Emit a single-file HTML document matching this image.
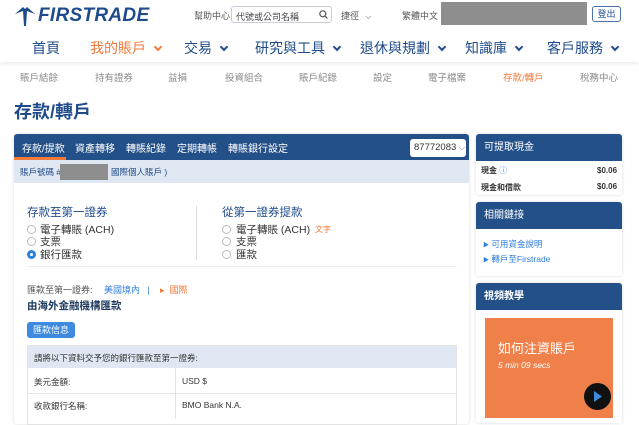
<!DOCTYPE html>
<html><head><meta charset="utf-8"><style>
*{margin:0;padding:0;box-sizing:border-box}
body{width:639px;height:416px;overflow:hidden;background:#fff;font-family:"Liberation Sans","Noto Sans CJK TC",sans-serif;position:relative;color:#333}
.a{position:absolute;white-space:nowrap}
.nav{color:#1f4b8a;font-size:14px;top:38px}
.chev{display:inline-block;width:6px;height:6px;border-right:2px solid currentColor;border-bottom:2px solid currentColor;transform:rotate(45deg);margin-left:9px;position:relative;top:-3px}
.sub{font-size:9.5px;color:#8a8a8a;top:70px}
.tab{font-size:10px;color:#fff;top:140px}
.rad{width:9px;height:9px;border:1px solid #bbb;border-radius:50%;position:absolute}
.lbl{font-size:10.5px;color:#333}
.hd{position:absolute;background:#245089;color:#fff;font-size:10px;padding-left:8px;border-radius:3px 3px 0 0}
</style></head><body>
<svg class="a" style="left:14px;top:5px" width="22" height="22" viewBox="0 0 22 22"><path d="M1 9 L9 2 L11 4 L13 2 L21 9 L13 6 L12 21 L10 21 L9 6 Z" fill="#1f4b8a"/></svg>
<div class="a" style="left:38px;top:5px;font-size:19px;font-weight:bold;font-style:italic;color:#1f4b8a;letter-spacing:0.3px">FIRSTRADE</div>
<div class="a" style="left:194px;top:9px;font-size:9px;color:#555">幫助中心</div>
<div class="a" style="left:231px;top:6px;width:101px;height:17px;border:1px solid #ccd;border-radius:3px;font-size:9px;color:#444;padding:3px 0 0 4px">代號或公司名稱</div>
<svg class="a" style="left:319px;top:10px" width="9" height="9"><circle cx="3.8" cy="3.8" r="3" stroke="#555" fill="none" stroke-width="1.2"/><path d="M6 6 L8.5 8.5" stroke="#555" stroke-width="1.2"/></svg>
<div class="a" style="left:341px;top:9px;font-size:9px;color:#555">捷徑 <span style="margin-left:4px;font-size:8px">⌵</span></div>
<div class="a" style="left:402px;top:9px;font-size:9px;color:#555">繁體中文 <span style="margin-left:2px;font-size:8px">⌵</span></div>
<div class="a" style="left:441px;top:2px;width:146px;height:23px;background:#8e8e8e"></div>
<div class="a" style="left:592px;top:6px;width:29px;height:16px;border:1px solid #4a72a8;border-radius:3px;font-size:9px;color:#1f4b8a;text-align:center;line-height:14px">登出</div>
<div class="a" style="left:0;top:30px;width:639px;height:32px;background:#fff;box-shadow:0 2px 4px rgba(0,0,0,0.08)"></div>
<div class="a nav" style="left:32px">首頁</div>
<div class="a nav" style="left:90px;color:#f07a3a">我的賬戶<span class="chev"></span></div>
<div class="a nav" style="left:184px">交易<span class="chev"></span></div>
<div class="a nav" style="left:255px">研究與工具<span class="chev"></span></div>
<div class="a nav" style="left:360px">退休與規劃<span class="chev"></span></div>
<div class="a nav" style="left:465px">知識庫<span class="chev"></span></div>
<div class="a nav" style="left:547px">客戶服務<span class="chev"></span></div>
<div class="a sub" style="left:20px">賬戶結餘</div>
<div class="a sub" style="left:95px">持有證券</div>
<div class="a sub" style="left:168px">益損</div>
<div class="a sub" style="left:225px">投資組合</div>
<div class="a sub" style="left:299px">賬戶紀錄</div>
<div class="a sub" style="left:373px">設定</div>
<div class="a sub" style="left:428px">電子檔案</div>
<div class="a sub" style="left:503px;color:#f07a3a">存款/轉戶</div>
<div class="a sub" style="left:580px">稅務中心</div>
<div class="a" style="left:14px;top:98px;font-size:18px;font-weight:bold;color:#1f4b8a">存款/轉戶</div>
<div class="a" style="left:14px;top:134px;width:455px;height:290px;background:#fff;box-shadow:0 0 3px rgba(0,0,0,0.15);border-radius:3px"></div>
<div class="a" style="left:14px;top:134px;width:455px;height:26px;background:#245089;border-radius:3px 3px 0 0"></div>
<div class="a" style="left:14px;top:157px;width:52px;height:3px;background:#f07a3a"></div>
<div class="a tab" style="left:22px">存款/提款</div>
<div class="a tab" style="left:75px">資產轉移</div>
<div class="a tab" style="left:126px">轉賬紀錄</div>
<div class="a tab" style="left:177px">定期轉帳</div>
<div class="a tab" style="left:228px">轉賬銀行設定</div>
<div class="a" style="left:410px;top:139px;width:56px;height:18px;background:#fff;border-radius:3px;font-size:9.5px;color:#333;padding:3px 0 0 4px">87772083 <span style="font-size:8px;color:#777">⌵</span></div>
<div class="a" style="left:14px;top:160px;width:455px;height:23px;background:#dfe7f2"></div>
<div class="a" style="left:20px;top:166px;font-size:8.5px;color:#1f4b8a">賬戶號碼 #</div>
<div class="a" style="left:60px;top:164px;width:48px;height:16px;background:#8e8e8e"></div>
<div class="a" style="left:111px;top:166px;font-size:8.5px;color:#1f4b8a">國際個人賬戶 )</div>
<div class="a" style="left:27px;top:204px;font-size:11.5px;color:#1f4b8a">存款至第一證券</div>
<div class="rad" style="left:27px;top:225px"></div><div class="a lbl" style="left:40px;top:222px">電子轉賬 (ACH)</div>
<div class="rad" style="left:27px;top:237px"></div><div class="a lbl" style="left:40px;top:234px">支票</div>
<div class="rad" style="left:27px;top:250px;border:3px solid #2d7fe0"></div><div class="a lbl" style="left:40px;top:247px">銀行匯款</div>
<div class="a" style="left:196px;top:206px;width:1px;height:54px;background:#ddd"></div>
<div class="a" style="left:222px;top:204px;font-size:11.5px;color:#1f4b8a">從第一證券提款</div>
<div class="rad" style="left:222px;top:225px"></div><div class="a lbl" style="left:236px;top:222px">電子轉賬 (ACH)</div>
<div class="a" style="left:315px;top:224px;font-size:8px;color:#f07a3a">文字</div>
<div class="rad" style="left:222px;top:237px"></div><div class="a lbl" style="left:236px;top:234px">支票</div>
<div class="rad" style="left:222px;top:250px"></div><div class="a lbl" style="left:236px;top:247px">匯款</div>
<div class="a" style="left:27px;top:266px;width:430px;height:1px;background:#eee"></div>
<div class="a" style="left:27px;top:283px;font-size:9px;color:#555">匯款至第一證券:</div>
<div class="a" style="left:104px;top:283px;font-size:9px;color:#2d7fe0">美國境內 &nbsp;&nbsp;|</div>
<div class="a" style="left:160px;top:283px;font-size:9px;color:#f07a3a">▸ &nbsp;國際</div>
<div class="a" style="left:27px;top:298px;font-size:10.5px;font-weight:bold;color:#1f3a60">由海外金融機構匯款</div>
<div class="a" style="left:27px;top:322px;width:48px;height:16px;background:#3d8ae0;border-radius:3px;color:#fff;font-size:9px;text-align:center;line-height:16px">匯款信息</div>
<div class="a" style="left:27px;top:345px;width:430px;height:80px;border:1px solid #e3e3e3"></div>
<div class="a" style="left:28px;top:346px;width:428px;height:22px;background:#dfe7f2"></div>
<div class="a" style="left:34px;top:352px;font-size:8.5px;color:#333">請將以下資料交予您的銀行匯款至第一證券:</div>
<div class="a" style="left:28px;top:393px;width:428px;height:1px;background:#e3e3e3"></div>
<div class="a" style="left:175px;top:368px;width:1px;height:50px;background:#e3e3e3"></div>
<div class="a" style="left:34px;top:376px;font-size:8.5px;color:#333">美元金額:</div>
<div class="a" style="left:182px;top:376px;font-size:8.5px;color:#333">USD $</div>
<div class="a" style="left:34px;top:400px;font-size:8.5px;color:#333">收款銀行名稱:</div>
<div class="a" style="left:182px;top:400px;font-size:8.5px;color:#333">BMO Bank N.A.</div>
<div class="a" style="left:476px;top:134px;width:146px;height:61px;background:#fff;box-shadow:0 0 3px rgba(0,0,0,0.15);border-radius:3px"></div>
<div class="hd" style="left:476px;top:134px;width:146px;height:27px;line-height:27px">可提取現金</div>
<div class="a" style="left:481px;top:165px;font-size:8px;font-weight:bold;color:#333">現金 <span style="color:#2d7fe0;font-weight:normal">ⓘ</span></div>
<div class="a" style="left:597px;top:166px;font-size:8px;font-weight:bold;color:#333">$0.06</div>
<div class="a" style="left:481px;top:182px;font-size:8px;font-weight:bold;color:#333">現金和借款</div>
<div class="a" style="left:597px;top:182px;font-size:8px;font-weight:bold;color:#333">$0.06</div>
<div class="a" style="left:476px;top:202px;width:146px;height:74px;background:#fff;box-shadow:0 0 3px rgba(0,0,0,0.15);border-radius:3px"></div>
<div class="hd" style="left:476px;top:202px;width:146px;height:27px;line-height:27px">相關鏈接</div>
<div class="a" style="left:483px;top:238px;font-size:8.5px;color:#2d7fe0"><span style="font-size:6px">▶</span> 可用資金說明</div>
<div class="a" style="left:483px;top:253px;font-size:8.5px;color:#2d7fe0"><span style="font-size:6px">▶</span> 轉戶至Firstrade</div>
<div class="a" style="left:476px;top:283px;width:146px;height:140px;background:#fff;box-shadow:0 0 3px rgba(0,0,0,0.15);border-radius:3px"></div>
<div class="hd" style="left:476px;top:283px;width:146px;height:27px;line-height:27px;font-weight:bold">視頻教學</div>
<div class="a" style="left:485px;top:318px;width:128px;height:100px;background:#f0804a"></div>
<div class="a" style="left:498px;top:338px;font-size:13px;color:#fff">如何注資賬戶</div>
<div class="a" style="left:498px;top:360px;font-size:8.5px;color:#fff;font-style:italic">5 min 09 secs</div>
<div class="a" style="left:584px;top:383px;width:27px;height:27px;border-radius:50%;background:#111"></div>
<svg class="a" style="left:593px;top:390px" width="10" height="13"><path d="M1 1 L9 6.5 L1 12 Z" fill="#3d8ae0"/></svg>
</body></html>
